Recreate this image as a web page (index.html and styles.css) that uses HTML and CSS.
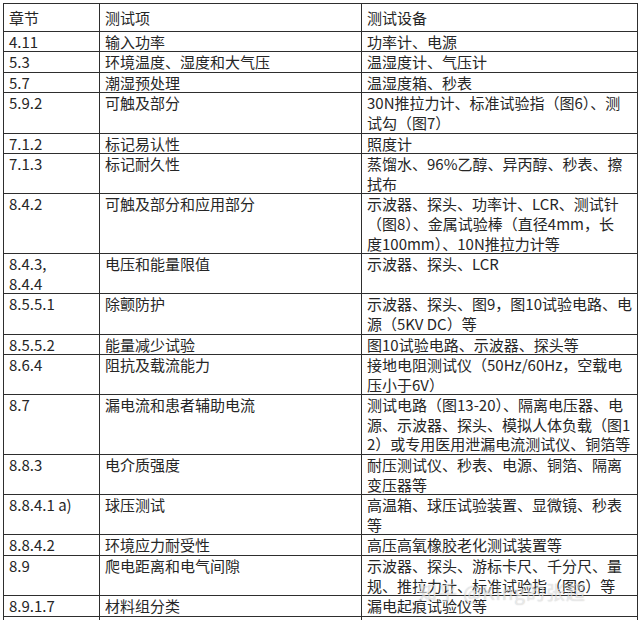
FILE: index.html
```html
<!DOCTYPE html>
<html lang="zh-CN">
<head>
<meta charset="utf-8">
<title>测试设备表</title>
<link rel="stylesheet" href="styles.css">
</head>
<body>
<div class="page">
<table class="spec">
<colgroup><col class="c1"><col class="c2"><col class="c3"></colgroup>
<thead>
<tr class="head"><th>章节</th><th>测试项</th><th>测试设备</th></tr>
</thead>
<tbody>
<tr><td>4.11</td><td>输入功率</td><td>功率计、电源</td></tr>
<tr><td>5.3</td><td>环境温度、湿度和大气压</td><td>温湿度计、气压计</td></tr>
<tr><td>5.7</td><td>潮湿预处理</td><td>温湿度箱、秒表</td></tr>
<tr><td>5.9.2</td><td>可触及部分</td><td>30N推拉力计、标准试验指（图6）、测<br>试勾（图7）</td></tr>
<tr><td>7.1.2</td><td>标记易认性</td><td>照度计</td></tr>
<tr><td>7.1.3</td><td>标记耐久性</td><td>蒸馏水、96%乙醇、异丙醇、秒表、擦<br>拭布</td></tr>
<tr><td>8.4.2</td><td>可触及部分和应用部分</td><td>示波器、探头、功率计、LCR、测试针<br>（图8）、金属试验棒（直径4mm，长<br>度100mm）、10N推拉力计等</td></tr>
<tr><td>8.4.3,<br>8.4.4</td><td>电压和能量限值</td><td>示波器、探头、LCR</td></tr>
<tr><td>8.5.5.1</td><td>除颤防护</td><td>示波器、探头、图9，图10试验电路、电<br>源（5KV DC）等</td></tr>
<tr><td>8.5.5.2</td><td>能量减少试验</td><td>图10试验电路、示波器、探头等</td></tr>
<tr><td>8.6.4</td><td>阻抗及载流能力</td><td>接地电阻测试仪（50Hz/60Hz，空载电<br>压小于6V）</td></tr>
<tr><td>8.7</td><td>漏电流和患者辅助电流</td><td>测试电路（图13-20）、隔离电压器、电<br>源、示波器、探头、模拟人体负载（图1<br>2）或专用医用泄漏电流测试仪、铜箔等</td></tr>
<tr><td>8.8.3</td><td>电介质强度</td><td>耐压测试仪、秒表、电源、铜箔、隔离<br>变压器等</td></tr>
<tr><td>8.8.4.1 a)</td><td>球压测试</td><td>高温箱、球压试验装置、显微镜、秒表<br>等</td></tr>
<tr><td>8.8.4.2</td><td>环境应力耐受性</td><td>高压高氧橡胶老化测试装置等</td></tr>
<tr><td>8.9</td><td>爬电距离和电气间隙</td><td>示波器、探头、游标卡尺、千分尺、量<br>规、推拉力计、标准试验指（图6）等</td></tr>
<tr><td>8.9.1.7</td><td>材料组分类</td><td>漏电起痕试验仪等</td></tr>
<tr class="tail"><td></td><td></td><td></td></tr>
</tbody>
</table>
<div class="watermark">知乎 @King的张超</div>
</div>
</body>
</html>
```

FILE: styles.css
```css
html, body {
  margin: 0;
  padding: 0;
  background: #ffffff;
}
.page {
  position: relative;
  width: 640px;
  height: 620px;
  overflow: hidden;
  padding: 3px 0 0 3px;
  box-sizing: border-box;
}
.spec {
  border-collapse: collapse;
  table-layout: fixed;
  width: 634px;
  font-family: "Noto Sans CJK SC", "Noto Sans", sans-serif;
  font-size: 15px;
  color: #262626;
}
.c1 { width: 96px; }
.c2 { width: 262px; }
.c3 { width: 276px; }
.spec th,
.spec td {
  border: 1px solid #2e2e2e;
  text-align: left;
  vertical-align: top;
  font-weight: normal;
  white-space: nowrap;
  line-height: 19.6px;
  padding: 0 0 0 5px;
  overflow: hidden;
}
.spec .head th {
  padding-top: 4px;
  padding-bottom: 3px;
}
.spec .tail td {
  height: 19.6px;
}
.watermark {
  position: absolute;
  left: 418px;
  top: 578px;
  font-family: "Noto Sans CJK SC", sans-serif;
  font-size: 19px;
  color: rgba(255, 255, 255, 0.55);
  text-shadow: 0 0 1px rgba(90, 90, 90, 0.35);
  letter-spacing: 1px;
  white-space: nowrap;
}
```
